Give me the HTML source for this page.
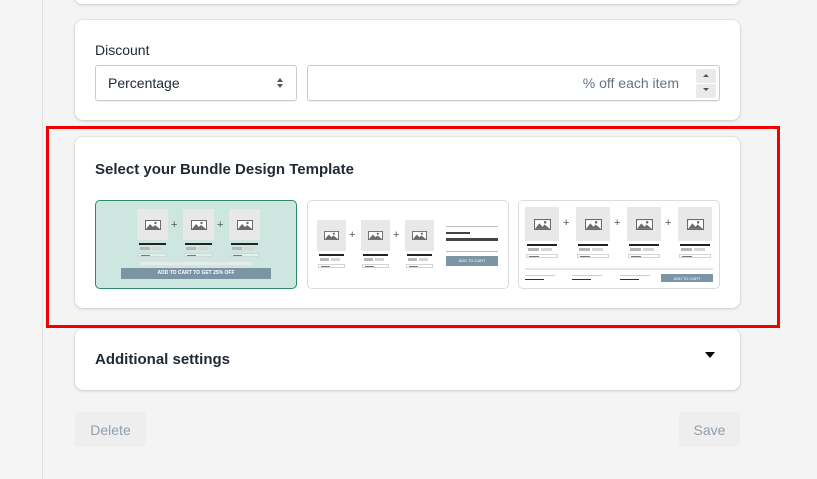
<!DOCTYPE html>
<html><head><meta charset="utf-8"><style>
*{box-sizing:border-box;margin:0;padding:0}
body{width:817px;height:479px;background:#f4f4f4;position:relative;overflow:hidden;font-family:"Liberation Sans","DejaVu Sans",sans-serif;color:#212b36}
.a{position:absolute}
.card{position:absolute;background:#fff;border-radius:8px;box-shadow:0 0 0 1px rgba(63,63,68,.05),0 1px 3px rgba(63,63,68,.18)}
.tpl{position:absolute;border:1px solid #dcdcdc;border-radius:5px;background:#fff}
</style></head><body>
<div class="a" style="left:0;top:0;width:43px;height:479px;background:#f5f5f5;border-right:1px solid #e1e1e1"></div>
<div class="card" style="left:75px;top:-10px;width:665px;height:14px"></div>
<div class="card" style="left:75px;top:20px;width:665px;height:100px"></div>
<div class="a" style="left:95px;top:42px;font-size:14px">Discount</div>
<div class="a" style="left:95px;top:65px;width:202px;height:36px;border:1px solid #c4cdd5;border-radius:3px;font-size:14px;padding:9px 0 0 12px;box-shadow:0 1px 0 rgba(22,29,37,.05)">Percentage
<svg class="a" style="right:12px;top:11px" width="8" height="12" viewBox="0 0 8 12"><path d="M1 5L4 1L7 5Z M1 7L4 11L7 7Z" fill="#555"/></svg></div>
<div class="a" style="left:307px;top:65px;width:413px;height:36px;border:1px solid #c4cdd5;border-radius:3px;font-size:14px;color:#637381;box-shadow:0 1px 0 rgba(22,29,37,.05)"><span class="a" style="right:40px;top:9px">% off each item</span>
<div class="a" style="right:3px;top:3px;width:20px;height:14px;background:#eaeaea;border-radius:2px"></div>
<div class="a" style="right:3px;top:18px;width:20px;height:14px;background:#eaeaea;border-radius:2px"></div>
<svg class="a" style="right:10px;top:8px" width="6" height="20"><path d="M0 3L3 0L6 3Z M0 14L3 17L6 14Z" fill="#555"/></svg></div>

<div class="card" style="left:75px;top:137px;width:665px;height:171px"></div>
<div class="a" style="left:95px;top:161px;font-size:15px;font-weight:bold;color:#212b36">Select your Bundle Design Template</div>
<div class="tpl" style="left:95px;top:200px;width:202px;height:89px;background:#cde6df;border-color:#2e8a63"></div>
<div class="tpl" style="left:307px;top:200px;width:202px;height:89px"></div>
<div class="tpl" style="left:518px;top:200px;width:202px;height:89px"></div>
<div id="t"></div>
<div class="a" style="left:46px;top:126px;width:734px;height:202px;border:3px solid #f20000"></div>

<div class="card" style="left:75px;top:329px;width:665px;height:61px"></div>
<div class="a" style="left:95px;top:351px;font-size:15px;font-weight:bold">Additional settings</div>
<svg class="a" style="left:705px;top:352px" width="10" height="6"><path d="M0 0H10L5 6Z" fill="#000"/></svg>
<div class="a" style="left:75px;top:412px;width:71px;height:35px;background:#eeeeee;border-radius:4px;color:#919eab;font-size:14px;text-align:center;line-height:36px">Delete</div>
<div class="a" style="left:679px;top:412px;width:61px;height:35px;background:#eeeeee;border-radius:4px;color:#919eab;font-size:14px;text-align:center;line-height:36px">Save</div>
<script>
var h='';
function r(x,y,w,hh,c){h+='<div class="a" style="left:'+x+'px;top:'+y+'px;width:'+w+'px;height:'+hh+'px;background:'+c+'"></div>';}
function prod(x,y,w,ih){
 r(x,y,w,ih,'#e8e8e8');
 var iw=Math.round(w*0.5),ihh=Math.round(iw*0.62);
 var ix=x+Math.round((w-iw)/2),iy=y+Math.round((ih-ihh)/2);
 h+='<svg class="a" style="left:'+ix+'px;top:'+iy+'px" width="'+iw+'" height="'+ihh+'" viewBox="0 0 16 10" preserveAspectRatio="none"><rect x="0.5" y="0.5" width="15" height="9" fill="#fff" stroke="#6b6b6b"/><path d="M1 9L5 4L8 7L10 5L15 9Z" fill="#6b6b6b"/><circle cx="10.5" cy="3" r="1.2" fill="#6b6b6b"/></svg>';
 var ly=y+ih+3;
 r(x+2,ly,w-4,2,'#222');
 var pw=Math.round((w-8)/2.4);
 r(x+Math.round(w*0.1),ly+4,pw,3,'#b8b8b8');
 r(x+Math.round(w*0.1)+pw+2,ly+4,pw,3,'#d6d6d6');
 h+='<div class="a" style="left:'+(x+1)+'px;top:'+(ly+10)+'px;width:'+(w-2)+'px;height:4px;border:1px solid #cfd6d4;background:rgba(255,255,255,.4)"><div class="a" style="left:2px;top:1px;width:'+Math.round(w*0.3)+'px;height:1px;background:#777"></div></div>';
}
function plus(x,y){h+='<div class="a" style="left:'+x+'px;top:'+y+'px;font-size:11px;color:#555;line-height:10px">+</div>';}
prod(137,209,31,31);plus(171,220);prod(183,209,31,31);plus(217,220);prod(229,209,31,31);
r(140,262,112,3,'#e6ebea');r(121,268,150,11,'#7b95a4');
h+='<div class="a" style="left:121px;top:270px;width:150px;font-size:5px;color:#fff;text-align:center;font-weight:bold;line-height:7px">ADD TO CART TO GET 25% OFF</div>';
prod(317,220,29,31);plus(349,230);prod(361,220,29,31);plus(393,230);prod(405,220,29,31);
r(446,226,52,1,'#bbb');r(446,232,24,2,'#444');r(446,238,52,3,'#444');r(446,251,52,1,'#bbb');r(446,256,52,10,'#7b95a4');
h+='<div class="a" style="left:446px;top:258px;width:52px;font-size:4px;color:#fff;text-align:center;line-height:6px">ADD TO CART</div>';
prod(525,207,34,34);plus(563,218);prod(576,207,34,34);plus(614,218);prod(627,207,34,34);plus(665,218);prod(678,207,34,34);
r(525,268,188,2,'#e6e6e6');
r(525,275,30,1,'#ccc');r(525,279,19,1,'#333');r(572,275,30,1,'#ccc');r(572,279,19,1,'#333');r(620,275,30,1,'#ccc');r(620,279,19,1,'#333');
r(661,274,52,8,'#7b95a4');
h+='<div class="a" style="left:661px;top:276px;width:52px;font-size:4px;color:#fff;text-align:center;line-height:5px">ADD TO CART</div>';
document.getElementById('t').innerHTML=h;
</script>
</body></html>
